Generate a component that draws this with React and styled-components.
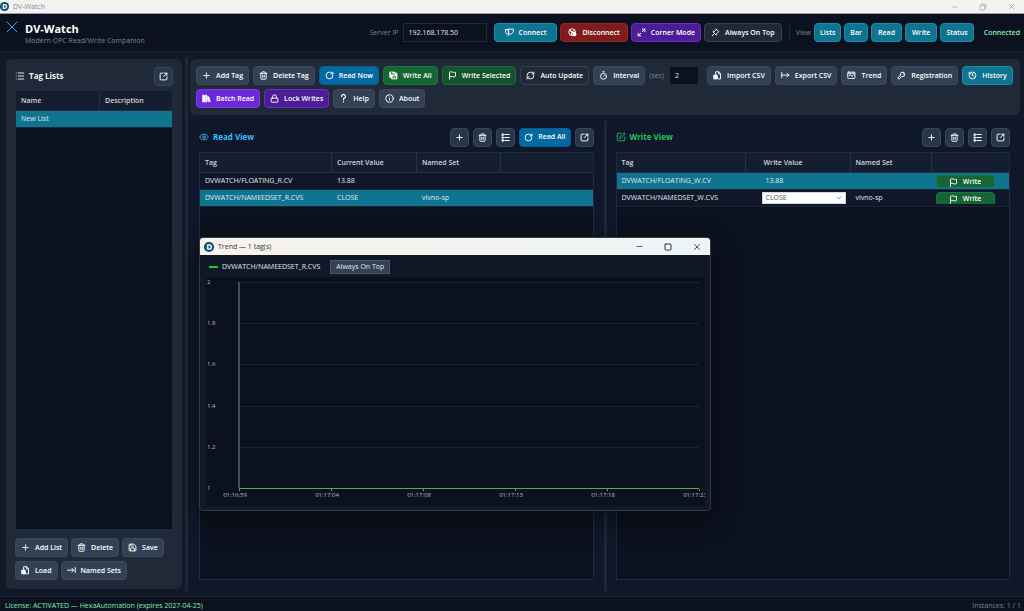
import React from "react";
import styled, { createGlobalStyle } from "styled-components";
import {
  Eye,
  Flag,
  History,
  Info,
  List,
  Lock,
  Minus,
  Plus,
  RefreshCw,
  RotateCw,
  Save,
  SquareArrowOutUpRight,
  SquarePen,
  Timer,
  Trash2,
  X,
} from "lucide-react";

const GlobalStyle = createGlobalStyle`
  * {
    box-sizing: border-box;
  }
  body {
    margin: 0;
    background: #111827;
    color: #e5e7eb;
    font-family: "Open Sans", "Noto Sans", sans-serif;
    font-size: 7px;
    line-height: 10px;
  }
  button, input, select {
    font: inherit;
    color: inherit;
    margin: 0;
  }
`;

const tones = {
  slate: ["#334155", "#3d4a5c"],
  icon: ["#28364a", "#3a475a"],
  dark: ["#1f2937", "#374151"],
  teal: ["#0e7490", "#1590a8"],
  blue: ["#0369a1", "#0b5c8c"],
  green: ["#166534", "#1a7a3e"],
  forest: ["#14532d", "#17683a"],
  red: ["#7f1d1d", "#a32020"],
  purple: ["#4c1d95", "#6d28d9"],
  violet: ["#6d28d9", "#7c3aed"],
};

const Shell = styled.div`
  display: flex;
  flex-direction: column;
  min-height: 100vh;
  position: relative;
`;

const TitleBar = styled.div`
  display: flex;
  align-items: center;
  height: 14px;
  gap: 4px;
  background: #f3f3f3;
  border-bottom: 1px solid #9a9da3;
  color: #8b8b8b;
`;

const WindowButtons = styled.div`
  display: flex;
  align-items: center;
  margin-left: auto;
  padding-right: 8px;
  gap: 20px;
`;

const WindowButton = styled.button`
  display: flex;
  padding: 0;
  border: 0;
  background: none;
  color: ${({ $color }) => $color || "#9a9a9a"};
`;

const Header = styled.header`
  display: flex;
  align-items: center;
  height: 38px;
  padding: 0 4px 0 6px;
  background: #0b111e;
  border-bottom: 1px solid #162030;
`;

const Brand = styled.div`
  display: flex;
  align-items: flex-start;
  gap: 7px;
  margin-right: auto;
`;

const BrandName = styled.h1`
  margin: 0;
  font-size: 11px;
  line-height: 15px;
  font-weight: 700;
  color: #fff;
`;

const BrandNote = styled.div`
  line-height: 9px;
  color: #7b8494;
`;

const HeaderTools = styled.div`
  display: flex;
  align-items: center;
  gap: 3px;
`;

const Muted = styled.label`
  color: #7b8494;
`;

const Field = styled.input`
  width: ${({ $width }) => $width}px;
  height: 19px;
  padding: 0 5px;
  margin: 0 ${({ $after }) => $after || 0}px 0 1px;
  background: #0b111e;
  border: 1px solid #1f2937;
  border-radius: 0;
  outline: none;
`;

const Rule = styled.div`
  width: 1px;
  height: 16px;
  margin: 0 3px 0 4px;
  background: #1f2937;
`;

const Connected = styled.span`
  margin-left: 7px;
  font-weight: 600;
  color: #86efac;
`;

const Button = styled.button`
  display: inline-flex;
  align-items: center;
  justify-content: center;
  gap: 5px;
  height: ${({ $height }) => $height || 19}px;
  padding: 0 ${({ $pad }) => $pad ?? 5}px;
  ${({ $width }) => $width && `width: ${$width}px;`}
  border: 1px solid ${({ $tone }) => tones[$tone || "slate"][1]};
  border-radius: 4px;
  background: ${({ $tone }) => tones[$tone || "slate"][0]};
  color: #fff;
  font-weight: 600;
  white-space: nowrap;

  svg {
    flex: none;
    width: 9px;
    height: 9px;
  }
`;

const Main = styled.main`
  display: flex;
  flex: 1;
  padding: 7px 4px 7px 6px;
  gap: 2px;
`;

const Splitter = styled.div`
  width: 3px;
  margin: -2px 0 -2px;
  background: #1c2738;
`;

const Sidebar = styled.aside`
  display: flex;
  flex-direction: column;
  width: 176px;
  padding: 7px 9px 9px;
  margin-right: 1px;
  border-radius: 6px;
  background: #1f2937;
`;

const SideHead = styled.div`
  display: flex;
  align-items: center;
  height: 20px;
  gap: 4px;
  margin-bottom: 4px;

  button {
    margin-left: auto;
  }
`;

const Heading = styled.h2`
  margin: 0;
  font-size: 8px;
  line-height: 12px;
  font-weight: 700;
  color: ${({ $color }) => $color || "#f3f4f6"};
`;

const SideActions = styled.div`
  display: flex;
  flex-wrap: wrap;
  gap: 4px 3px;
  margin-top: 8px;
`;

const Content = styled.div`
  display: flex;
  flex-direction: column;
  flex: 1;
  min-width: 0;
  gap: 7px;
`;

const Toolbar = styled.div`
  display: flex;
  flex-wrap: wrap;
  align-items: center;
  gap: 4px;
  padding: 7px 6px 7px 6px;
  border-radius: 6px;
  background: #1f2937;
`;

const Views = styled.div`
  display: flex;
  flex: 1;
`;

const View = styled.section`
  display: flex;
  flex-direction: column;
  flex: 1;
  min-width: 0;
  padding: 5px 10px 9px 9px;
  background: #0f172a;
`;

const ViewHead = styled.div`
  display: flex;
  align-items: center;
  height: 20px;
  gap: 4px;
  margin-bottom: 5px;
`;

const ViewTools = styled.div`
  display: flex;
  gap: 4px;
  margin-left: auto;
`;

const TableBox = styled.div`
  flex: 1;
  border: 1px solid #1f2b3c;
  background: #0b111e;
`;

const Table = styled.table`
  width: 100%;
  table-layout: fixed;
  border-collapse: separate;
  border-spacing: 0;

  th {
    height: 20px;
    padding: 0 5px;
    text-align: left;
    font-weight: 600;
    color: #d1d5db;
    background: #151e30;
    border-right: 1px solid #253143;
    border-bottom: 1px solid #253143;
  }
  th:last-child {
    border-right: 0;
  }
  td {
    height: 17px;
    padding: 0 5px;
    white-space: nowrap;
    overflow: hidden;
    border-bottom: 1px solid #1a2536;
  }
`;

const Row = styled.tr`
  background: ${({ $selected }) => ($selected ? "#0e7490" : "#0f1729")};
`;

const IndentHead = styled.th`
  && {
    padding-left: 18px;
  }
`;

const ValueCell = styled.td`
  && {
    padding: 0 4px 0 16px;
  }
`;

const PlainValue = styled.span`
  padding-left: 4px;
`;

const Select = styled.select`
  display: block;
  width: 84px;
  height: 12px;
  padding: 0 3px;
  appearance: none;
  border: 1px solid #d1d5db;
  border-radius: 0;
  background: #fff;
  color: #4b5563;
`;

const SelectWrap = styled.div`
  display: grid;
  width: 84px;
  align-items: center;

  > * {
    grid-area: 1 / 1;
  }
  svg {
    justify-self: end;
    margin-right: 4px;
    color: #6b7280;
    pointer-events: none;
  }
`;

const WriteClip = styled.div`
  height: 12px;
  width: 59px;
  margin-left: -1px;
  overflow: hidden;
`;

const StatusBar = styled.footer`
  display: flex;
  align-items: center;
  justify-content: space-between;
  height: 15px;
  padding: 3px 3px 0 5px;
  background: #0b111e;
  border-top: 1px solid #1a2536;
  color: #7b8494;
`;

const License = styled.span`
  color: #86efac;
`;

const TrendWindow = styled.div`
  position: absolute;
  left: 199px;
  top: 237px;
  width: 512px;
  border: 1px solid #343a44;
  border-radius: 4px;
  overflow: hidden;
  background: #111827;
  box-shadow: 0 8px 24px rgba(0, 0, 0, 0.45);
`;

const TrendTitle = styled.div`
  display: flex;
  align-items: center;
  height: 17px;
  gap: 4px;
  padding-left: 4px;
  background: linear-gradient(90deg, #f8f3ec, #edf5f5);
  color: #333;
`;

const TrendHead = styled.div`
  display: flex;
  align-items: center;
  height: 22px;
  gap: 4px;
  padding: 2px 9px 0;
`;

const Swatch = styled.span`
  width: 9px;
  height: 2px;
  background: #22c52e;
`;

const PinButton = styled.button`
  height: 14px;
  padding: 0 5px;
  margin-left: 6px;
  border: 1px solid #4b5563;
  background: #334155;
`;

const Chart = styled.svg`
  display: block;
  margin: 0 5px 4px 6px;
  background: #0b111e;
`;

const Glyph = ({ size = 10, width = 2, children }) => (
  <svg
    width={size}
    height={size}
    viewBox="0 0 24 24"
    fill="none"
    stroke="currentColor"
    strokeWidth={width}
    strokeLinecap="round"
    strokeLinejoin="round"
  >
    {children}
  </svg>
);

const AppMark = ({ size }) => (
  <svg width={size} height={size} viewBox="0 0 24 24">
    <circle cx="12" cy="12" r="12" fill="#0b3a56" />
    <circle cx="12" cy="12" r="9" fill="#0e6c8c" />
    <path d="M9 7h3.500a5 5 0 0 1 0 10H9z" fill="none" stroke="#fff" strokeWidth="3" />
  </svg>
);

const ConnectIcon = () => (
  <Glyph width={2.5}>
    <path d="M2 4h7v9l-3 4-4-4zM9 3h13v8l-5 5h-6zM11 16l-3 5" />
  </Glyph>
);

const DisconnectIcon = () => (
  <Glyph width={2.5}>
    <circle cx="11" cy="11" r="9" />
    <path d="M4 7l7 4 7-6M11 11l-3 8M11 11l9 2M6 4l11 15" />
    <circle cx="17" cy="17" r="4" fill="currentColor" />
  </Glyph>
);

const CornerIcon = () => (
  <Glyph width={2.5}>
    <path d="M14 3h7v7M21 3l-7 7M10 21H3v-7M3 21l7-7" />
  </Glyph>
);

const PinIcon = () => (
  <Glyph width={2.5}>
    <path d="M14 3l7 7-2 1-4 4-1 4-9-9 4-1 4-4zM9 15l-6 6" />
  </Glyph>
);

const SaveAllIcon = () => (
  <Glyph width={2.5}>
    <path d="M3 3h12l3 3h3v15H7v-4H3z" fill="currentColor" />
    <path d="M7 4v4h7M11 20v-6h6v6" stroke="#166534" />
  </Glyph>
);

const BooksIcon = () => (
  <Glyph>
    <path d="M2 3h5v18H2zM9 3h4v18H9z" fill="currentColor" />
    <path d="M14 8l4-1 4 13-4 1z" fill="currentColor" />
  </Glyph>
);

const ImportIcon = () => (
  <Glyph width={2.5}>
    <path d="M7 9V2h8l5 5v14h-7M15 2v6h5" />
    <path d="M3 11h8v10H3z" fill="currentColor" />
    <path d="M9 14l4 3-4 3" />
  </Glyph>
);

const ExportIcon = () => (
  <Glyph width={2.5}>
    <path d="M2 4v14M2 11h19M16 6l5 5-5 5" />
  </Glyph>
);

const NamedSetsIcon = () => (
  <Glyph width={2.5}>
    <path d="M1 11h17M13 6l5 5-5 5M22 4v14" />
  </Glyph>
);

const TrendIcon = () => (
  <Glyph width={2.5}>
    <rect x="2" y="3" width="19" height="17" rx="2" />
    <path d="M6 13l3-4 4 6 4-5M3 6h18" />
  </Glyph>
);

const KeyIcon = () => (
  <Glyph width={2.5}>
    <path d="M9 11a6 6 0 1 1 5 4h-2l-7 7-3-3 7-8zM16 7l2 1" />
  </Glyph>
);

const HelpIcon = () => (
  <Glyph width={3}>
    <path d="M7 7a5 5 0 1 1 7 4c-2 1-2 2-2 4M12 20v1" />
  </Glyph>
);

const DetailsIcon = () => (
  <Glyph width={3}>
    <path d="M10 4h12M10 12h12M10 20h12" />
    <path d="M3 3h3v3H3zM3 11h3v2H3zM3 18h3v3H3z" />
  </Glyph>
);

const RestoreIcon = () => (
  <Glyph size={8}>
    <rect x="3" y="7" width="14" height="14" rx="2" />
    <path d="M8 3h10a3 3 0 0 1 3 3v10" />
  </Glyph>
);

const MaximizeIcon = () => (
  <Glyph size={8} width={3}>
    <rect x="3" y="3" width="18" height="18" rx="2" />
  </Glyph>
);

const IconButton = ({ label, children }) => (
  <Button $tone="icon" $pad={0} $width={19} aria-label={label}>
    {children}
  </Button>
);

const ViewActions = ({ children }) => (
  <ViewTools>
    <IconButton label="Add"><Plus strokeWidth={2.5} /></IconButton>
    <IconButton label="Delete"><Trash2 strokeWidth={2.5} /></IconButton>
    <IconButton label="Details"><DetailsIcon /></IconButton>
    {children}
    <IconButton label="Open in window"><SquareArrowOutUpRight strokeWidth={2.5} /></IconButton>
  </ViewTools>
);

const WriteButton = () => (
  <WriteClip>
    <Button $tone="green" $width={59} $height={14}>
      <Flag strokeWidth={2.5} /> Write
    </Button>
  </WriteClip>
);

const yLabels = ["2", "1.8", "1.6", "1.4", "1.2", "1"];
const xLabels = ["01:16:59", "01:17:04", "01:17:08", "01:17:13", "01:17:18", "01:17:23"];

const TrendChart = () => (
  <Chart width="499" height="229" viewBox="0 0 499 229" fontSize="6" fill="#b6bcc6">
    {yLabels.map((label, i) => (
      <g key={label}>
        <path d={`M33 ${Math.round(5 + i * 41.2) + 0.5}H493`} stroke="#1b2433" />
        <text x="1" y={Math.round(5 + i * 41.2) + 2}>{label}</text>
      </g>
    ))}
    <path d="M33 5V211" stroke="#5b616c" strokeWidth="1.500" />
    <path d="M33 211.500H493" stroke="#5aa655" />
    {xLabels.map((label, i) => (
      <g key={label}>
        <path d={`M${33 + i * 92}.5 212v2`} stroke="#5aa655" />
        <text x={29 + i * 92} y="220" textAnchor="middle">{label}</text>
      </g>
    ))}
  </Chart>
);

const App = () => {
  return (
    <Shell>
      <GlobalStyle />
      <TitleBar>
        <AppMark size={9} />
        DV-Watch
        <WindowButtons>
          <WindowButton aria-label="Minimize"><Minus size={8} /></WindowButton>
          <WindowButton aria-label="Restore"><RestoreIcon /></WindowButton>
          <WindowButton aria-label="Close"><X size={9} /></WindowButton>
        </WindowButtons>
      </TitleBar>

      <Header>
        <Brand>
          <Glyph size={12}>
            <path d="M2 2l20 20M22 2L2 22" stroke="#38a9e8" />
          </Glyph>
          <div>
            <BrandName>DV-Watch</BrandName>
            <BrandNote>Modern OPC Read/Write Companion</BrandNote>
          </div>
        </Brand>
        <HeaderTools>
          <Muted htmlFor="server">Server IP</Muted>
          <Field id="server" $width={84} $after={4} defaultValue="192.168.178.50" />
          <Button $tone="teal" $pad={10}><ConnectIcon /> Connect</Button>
          <Button $tone="red" $pad={7}><DisconnectIcon /> Disconnect</Button>
          <Button $tone="purple"><CornerIcon /> Corner Mode</Button>
          <Button $tone="dark" $pad={6}><PinIcon /> Always On Top</Button>
          <Rule />
          <Muted as="span">View</Muted>
          <Button $tone="teal">Lists</Button>
          <Button $tone="teal">Bar</Button>
          <Button $tone="teal" $pad={6}>Read</Button>
          <Button $tone="teal" $pad={6}>Write</Button>
          <Button $tone="teal">Status</Button>
          <Connected>Connected</Connected>
        </HeaderTools>
      </Header>

      <Main>
        <Sidebar>
          <SideHead>
            <List size={10} strokeWidth={2.5} />
            <Heading>Tag Lists</Heading>
            <IconButton label="Open in window"><SquareArrowOutUpRight strokeWidth={2.5} /></IconButton>
          </SideHead>
          <TableBox>
            <Table>
              <colgroup>
                <col width="84" />
                <col />
              </colgroup>
              <thead>
                <tr>
                  <th>Name</th>
                  <th>Description</th>
                </tr>
              </thead>
              <tbody>
                <Row $selected>
                  <td>New List</td>
                  <td />
                </Row>
              </tbody>
            </Table>
          </TableBox>
          <SideActions>
            <Button><Plus strokeWidth={2.5} /> Add List</Button>
            <Button><Trash2 strokeWidth={2.5} /> Delete</Button>
            <Button><Save strokeWidth={2.5} /> Save</Button>
            <Button><ImportIcon /> Load</Button>
            <Button><NamedSetsIcon /> Named Sets</Button>
          </SideActions>
        </Sidebar>
        <Splitter />

        <Content>
          <Toolbar>
            <Button><Plus strokeWidth={2.5} /> Add Tag</Button>
            <Button><Trash2 strokeWidth={2.5} /> Delete Tag</Button>
            <Button $tone="blue"><RotateCw strokeWidth={2.5} /> Read Now</Button>
            <Button $tone="green"><SaveAllIcon /> Write All</Button>
            <Button $tone="forest"><Flag strokeWidth={2.5} /> Write Selected</Button>
            <Button $tone="dark"><RefreshCw strokeWidth={2.5} /> Auto Update</Button>
            <Button><Timer strokeWidth={2.5} /> Interval</Button>
            <Muted htmlFor="interval">(sec)</Muted>
            <Field id="interval" $width={30} $after={4} defaultValue="2" />
            <Button><ImportIcon /> Import CSV</Button>
            <Button><ExportIcon /> Export CSV</Button>
            <Button><TrendIcon /> Trend</Button>
            <Button><KeyIcon /> Registration</Button>
            <Button $tone="teal"><History strokeWidth={2.5} /> History</Button>
            <Button $tone="violet"><BooksIcon /> Batch Read</Button>
            <Button $tone="purple"><Lock strokeWidth={2.5} /> Lock Writes</Button>
            <Button><HelpIcon /> Help</Button>
            <Button><Info strokeWidth={2.5} /> About</Button>
          </Toolbar>

          <Views>
            <View>
              <ViewHead>
                <Eye size={10} color="#38bdf8" />
                <Heading $color="#38bdf8">Read View</Heading>
                <ViewActions>
                  <Button $tone="blue" $pad={4}><RotateCw strokeWidth={2.5} /> Read All</Button>
                </ViewActions>
              </ViewHead>
              <TableBox>
                <Table>
                  <colgroup>
                    <col width="132" />
                    <col width="85" />
                    <col width="84" />
                    <col />
                  </colgroup>
                  <thead>
                    <tr>
                      <th>Tag</th>
                      <th>Current Value</th>
                      <th>Named Set</th>
                      <th />
                    </tr>
                  </thead>
                  <tbody>
                    <Row>
                      <td>DVWATCH/FLOATING_R.CV</td>
                      <td>13.88</td>
                      <td />
                      <td />
                    </Row>
                    <Row $selected>
                      <td>DVWATCH/NAMEEDSET_R.CVS</td>
                      <td>CLOSE</td>
                      <td>vlvno-sp</td>
                      <td />
                    </Row>
                  </tbody>
                </Table>
              </TableBox>
            </View>
            <Splitter />
            <View>
              <ViewHead>
                <SquarePen size={10} color="#22c55e" />
                <Heading $color="#22c55e">Write View</Heading>
                <ViewActions />
              </ViewHead>
              <TableBox>
                <Table>
                  <colgroup>
                    <col width="129" />
                    <col width="105" />
                    <col width="81" />
                    <col />
                  </colgroup>
                  <thead>
                    <tr>
                      <th>Tag</th>
                      <IndentHead>Write Value</IndentHead>
                      <th>Named Set</th>
                      <th />
                    </tr>
                  </thead>
                  <tbody>
                    <Row $selected>
                      <td>DVWATCH/FLOATING_W.CV</td>
                      <ValueCell><PlainValue>13.88</PlainValue></ValueCell>
                      <td />
                      <td><WriteButton /></td>
                    </Row>
                    <Row>
                      <td>DVWATCH/NAMEDSET_W.CVS</td>
                      <ValueCell>
                        <SelectWrap>
                          <Select aria-label="Write value" defaultValue="CLOSE">
                            <option>CLOSE</option>
                            <option>OPEN</option>
                          </Select>
                          <Glyph size={6} width={3}><path d="M4 8l8 8 8-8" /></Glyph>
                        </SelectWrap>
                      </ValueCell>
                      <td>vlvno-sp</td>
                      <td><WriteButton /></td>
                    </Row>
                  </tbody>
                </Table>
              </TableBox>
            </View>
          </Views>
        </Content>
      </Main>

      <StatusBar>
        <License>License: ACTIVATED — HexaAutomation (expires 2027-04-25)</License>
        <span>Instances: 1 / 1</span>
      </StatusBar>

      <TrendWindow>
        <TrendTitle>
          <AppMark size={10} />
          Trend — 1 tag(s)
          <WindowButtons>
            <WindowButton $color="#333" aria-label="Minimize"><Minus size={9} /></WindowButton>
            <WindowButton $color="#333" aria-label="Maximize"><MaximizeIcon /></WindowButton>
            <WindowButton $color="#333" aria-label="Close"><X size={10} /></WindowButton>
          </WindowButtons>
        </TrendTitle>
        <TrendHead>
          <Swatch />
          DVWATCH/NAMEEDSET_R.CVS
          <PinButton>Always On Top</PinButton>
        </TrendHead>
        <TrendChart />
      </TrendWindow>
    </Shell>
  );
};

export default App;
